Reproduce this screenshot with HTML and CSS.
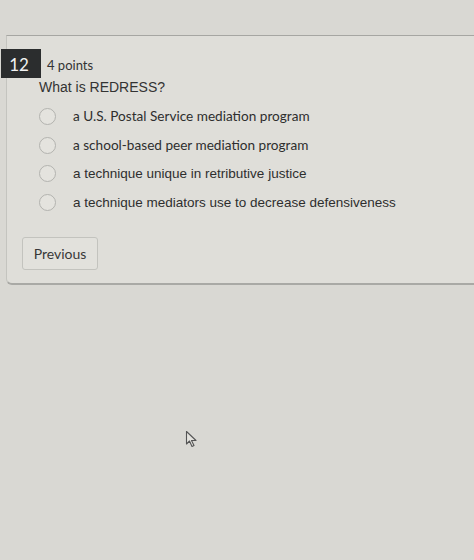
FILE: index.html
```html
<!DOCTYPE html>
<html>
<head>
<meta charset="utf-8">
<link rel="stylesheet" href="styles.css">
</head>
<body>
<div class="page">
  <div class="card">
    <div class="head">
      <div class="badge">12</div>
      <div class="points">4 points</div>
    </div>
    <div class="question">What is REDRESS?</div>
    <ul class="options">
      <li class="opt"><span class="radio"></span><span class="label lato">a U.S. Postal Service mediation program</span></li>
      <li class="opt"><span class="radio"></span><span class="label lato">a school-based peer mediation program</span></li>
      <li class="opt"><span class="radio"></span><span class="label arial">a technique unique in retributive justice</span></li>
      <li class="opt"><span class="radio"></span><span class="label arial">a technique mediators use to decrease defensiveness</span></li>
    </ul>
    <div class="actions">
      <button class="btn">Previous</button>
    </div>
  </div>
  <svg class="cursor" width="14" height="18" viewBox="0 0 14 18">
    <path d="M1.5 1.5 L1.5 14 L4.5 11 L7 16.5 L9 15.5 L6.5 10.5 L11 10.5 Z" fill="#e4e3de" stroke="#555" stroke-width="1.1" stroke-linejoin="round"/>
  </svg>
</div>
</body>
</html>
```
FILE: styles.css
```css
* { box-sizing: border-box; }
html, body { margin: 0; padding: 0; }
body {
  width: 474px;
  height: 560px;
  background: #d9d8d3;
  font-family: Lato, "Liberation Sans", sans-serif;
  color: #2d2d2d;
  overflow: hidden;
}
.page {
  position: relative;
  height: 560px;
  padding-top: 35px;
}
.card {
  margin-left: 6px;
  height: 250px;
  border-top: 1px solid #a6a6a2;
  border-left: 1px solid #c4c4bf;
  border-bottom: 2px solid #a9a9a5;
  border-bottom-left-radius: 6px;
  background: #dfded9;
  padding-top: 13px;
}
.head {
  display: flex;
  align-items: center;
  margin-left: -6px;
}
.badge {
  width: 40px;
  height: 29px;
  background: #2b2d2e;
  color: #f2f2f2;
  font-size: 17px;
  display: flex;
  align-items: center;
  justify-content: center;
  padding-right: 4px;
  padding-top: 2px;
}
.points {
  margin-left: 6px;
  font-size: 13px;
  color: #333;
  padding-top: 3px;
}
.question {
  margin-left: 32px;
  margin-top: 1px;
  font-family: "Liberation Sans", Arial, sans-serif;
  font-size: 14px;
  color: #333;
}
.options {
  list-style: none;
  margin: 7px 0 0 0;
  padding: 0;
}
.opt {
  display: flex;
  align-items: center;
  height: 28.7px;
  padding-left: 32px;
}
.radio {
  width: 17px;
  height: 17px;
  border-radius: 50%;
  border: 1px solid #b3b3af;
  background: #e4e3de;
  flex: none;
}
.label {
  margin-left: 17px;
  color: #2e2e2e;
}
.lato { font-family: Lato, sans-serif; font-size: 13.6px; }
.arial { font-family: "Liberation Sans", Arial, sans-serif; font-size: 13.5px; }
.actions {
  margin-top: 20px;
  padding-left: 15px;
}
.btn {
  width: 76px;
  height: 33px;
  border: 1px solid #c3c3be;
  border-radius: 3px;
  background: #e2e1dc;
  font-family: Lato, sans-serif;
  font-size: 14px;
  color: #383838;
  padding: 0;
}
.cursor {
  position: absolute;
  left: 185px;
  top: 430px;
}
```
